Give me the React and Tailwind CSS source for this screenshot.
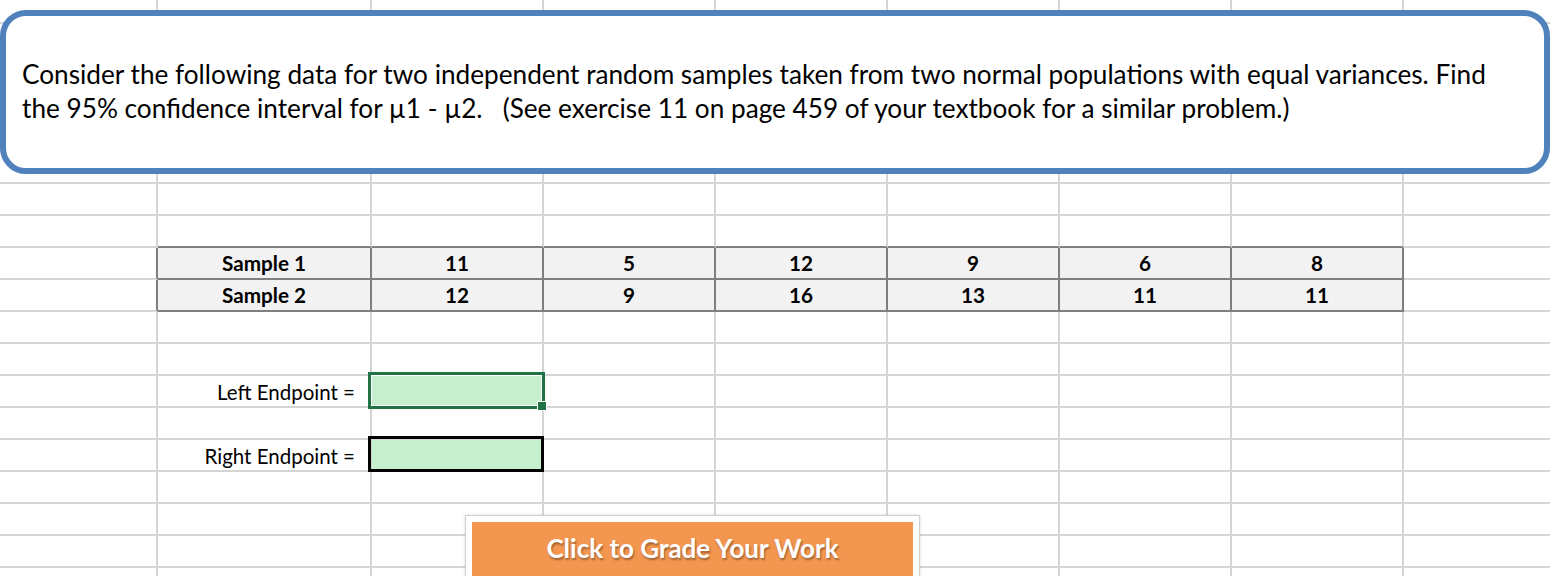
import React from "react";

// column widths include the 2px gridline on the right
const COLS = [158, 214, 172, 172, 172, 172, 172, 172, 172, 200];
// first row is cut off at the top of the window
const ROWS = [24, ...Array(18).fill(32)];

const sample1 = ["Sample 1", "11", "5", "12", "9", "6", "8"];
const sample2 = ["Sample 2", "12", "9", "16", "13", "11", "11"];

const base = "shrink-0 border-r-2 border-b-2";

function cellFor(r, c) {
  // data table rows
  if ((r === 8 || r === 9) && c >= 1 && c <= 7) {
    const vals = r === 8 ? sample1 : sample2;
    return {
      className: `${base} border-[#7f7f7f] bg-[#f2f2f2] flex items-center justify-center pt-[2px] font-bold text-[20.7px] text-black`,
      content: vals[c - 1],
    };
  }
  if (r === 7 && c >= 1 && c <= 7) {
    return { className: `${base} border-r-[#d5d5d5] border-b-[#7f7f7f]` };
  }
  if ((r === 8 || r === 9) && c === 0) {
    return { className: `${base} border-r-[#7f7f7f] border-b-[#d5d5d5]` };
  }

  // endpoint labels
  if ((r === 12 || r === 14) && c === 1) {
    return {
      className: `${base} border-[#d5d5d5] flex items-center justify-end pr-[15px] pt-[2px] text-[20.5px] text-black`,
      content: r === 12 ? "Left Endpoint =" : "Right Endpoint =",
    };
  }

  // answer cells
  if (r === 12 && c === 2) {
    return {
      className: `${base} border-[#d5d5d5] bg-[#c6efce] relative`,
      content: (
        <div className="absolute left-[-4px] top-[-4px] right-[-3px] bottom-[-3px] border-[3px] border-[#217346]">
          <div className="h-full w-full border border-white" />
          <div className="absolute right-[-5px] bottom-[-5px] h-[10px] w-[10px] bg-[#217346] border border-white" />
        </div>
      ),
    };
  }
  if (r === 14 && c === 2) {
    return {
      className: `${base} border-[#d5d5d5] bg-[#c6efce] relative`,
      content: (
        <div className="absolute left-[-4px] top-[-4px] right-[-2px] bottom-[-2px] border-[3px] border-black" />
      ),
    };
  }

  return { className: `${base} border-[#d5d5d5]` };
}

const SheetRow = ({ r, h }) => (
  <div className="flex" style={{ height: h }}>
    {COLS.map((w, c) => {
      const { className, content } = cellFor(r, c);
      return (
        <div key={c} className={className} style={{ width: w }}>
          {content}
        </div>
      );
    })}
  </div>
);

const App = () => {
  return (
    <div className="relative w-[1550px] h-[576px] overflow-hidden bg-white font-['Lato',_'Open_Sans',_sans-serif]">
      {/* spreadsheet grid */}
      <div className="flex flex-col">
        {ROWS.map((h, r) => (
          <SheetRow key={r} r={r} h={h} />
        ))}
      </div>

      {/* question text box shape */}
      <div className="absolute left-0 right-0 top-[10px] h-[164px] rounded-[26px] border-[6px] border-[#4f81bd] bg-white pl-[16px] pt-[41px]">
        <p className="text-[26.2px] leading-[34px] text-black whitespace-pre">
          Consider the following data for two independent random samples taken from two normal populations with equal variances. Find
          <br />
          {"the 95% confidence interval for µ1 - µ2.   (See exercise 11 on page 459 of your textbook for a similar problem.)"}
        </p>
      </div>

      {/* grade button shape */}
      <div className="absolute left-[465px] top-[515px] w-[455px] h-[80px] bg-white border border-[#d0d0d0] shadow-[0_0_3px_rgba(0,0,0,0.15)] p-[6px]">
        <div className="h-[54px] bg-[#f3964f] flex items-center justify-center pb-[2px]">
          <span className="text-white font-bold text-[26px] [text-shadow:1px_2px_2px_rgba(0,0,0,0.35)]">
            Click to Grade Your Work
          </span>
        </div>
      </div>
    </div>
  );
};

export default App;
